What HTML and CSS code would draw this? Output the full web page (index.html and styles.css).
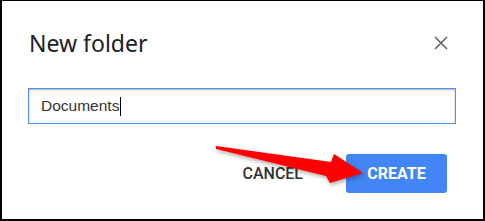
FILE: index.html
```html
<!DOCTYPE html>
<html lang="en">
<head>
	<meta charset="UTF-8">
	<title>New folder</title>
	<link rel="stylesheet" href="styles.css">
</head>
<body>
	<div class="dialog">
		<div class="dialog-head">
			<h1 class="dialog-title">New folder</h1>
			<button class="close-btn" aria-label="Close">
				<svg width="14" height="14" viewBox="0 0 14 14"><path d="M1 1L13 13M13 1L1 13" stroke="#5f6368" stroke-width="1.6" fill="none"/></svg>
			</button>
		</div>

		<div class="field">
			<span class="field-text">Documents</span><span class="caret"></span>
		</div>

		<div class="actions">
			<button class="btn btn-cancel">CANCEL</button>
			<button class="btn btn-create">CREATE</button>
		</div>

		<!-- red pointer arrow drawn over the buttons -->
		<svg class="pointer" width="485" height="221" viewBox="0 0 485 221">
			<defs>
				<filter id="shade" x="-10%" y="-30%" width="130%" height="180%">
					<feDropShadow dx="1" dy="2" stdDeviation="2" flood-color="#000" flood-opacity="0.35"/>
				</filter>
			</defs>
			<polygon points="216,146 331,162 334,154 363,173 330,183 326,176 216,149" fill="#ff0000" filter="url(#shade)"/>
		</svg>
	</div>
</body>
</html>
```

FILE: styles.css
```css
body {
    margin: 0;
    padding: 0;
    background: #fff;
}
.dialog {
    position: relative; /* the arrow sits on top */
    width: 485px;
    height: 221px;
    box-sizing: border-box;
    border: 2px solid #000;
    border-top-width: 1px;
    background: #fff;
    padding: 0 36px 0 26px;
}
.dialog-head {
    display: flex;
    justify-content: space-between;
    align-items: center;
    height: 65px;
    padding-top: 19px;
    box-sizing: border-box;
    margin-right: -1px;
}
.dialog-title {
    margin: 0 0 0 1px;
    font-family: "Noto Sans", sans-serif;
    font-weight: 400;
    font-size: 23px;
    line-height: 30px;
    color: #212121;
}
.close-btn {
    border: none;
    background: none;
    padding: 0;
    width: 14px;
    height: 14px;
    display: flex;
    cursor: pointer;
}
.field {
    margin: 22px -9px 0 0;
    height: 36px;
    box-sizing: border-box;
    border: 1px solid #4d90fe;
    box-shadow: inset 0 1px 2px rgba(0, 0, 0, 0.3);
    display: flex;
    align-items: center;
    padding-left: 12px;
    font-family: "Liberation Sans", Arial, sans-serif;
    font-size: 15.5px;
    color: #333;
}
.caret {
    width: 1px;
    height: 19px;
    background: #000;
    margin-left: 1px;
}
.actions {
    display: flex;
    justify-content: flex-end;
    align-items: center;
    gap: 43px;
    margin-top: 30px;
}
.btn {
    font-family: Roboto, sans-serif;
    font-size: 16px;
    border: none;
    cursor: pointer;
}
.btn-cancel {
    background: none;
    color: #333;
    font-weight: 500;
    padding: 0;
}
.btn-create {
    background: #4285f4;
    color: #fff;
    font-weight: 700;
    width: 101px;
    height: 39px;
    border-radius: 3px;
    padding: 0;
}
.pointer {
    position: absolute;
    left: -2px;
    top: -1px;
    pointer-events: none;
}
```
